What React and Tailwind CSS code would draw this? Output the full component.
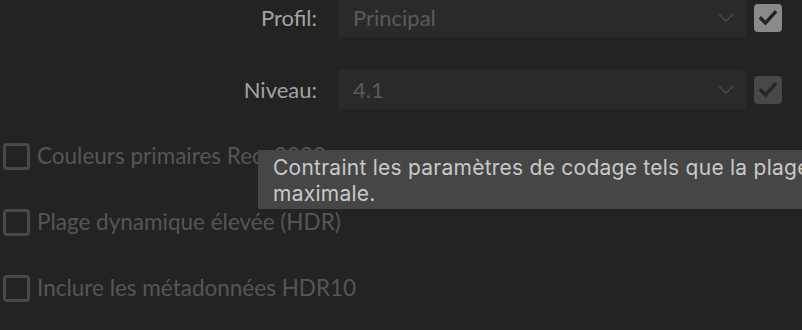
import { useState } from 'react';

function Chevron() {
  return (
    <svg width="16" height="9" viewBox="0 0 16 9" fill="none" className="shrink-0">
      <path d="M1 1l7 7 7-7" stroke="#4a4a4a" strokeWidth="1.6" />
    </svg>
  );
}

function CheckMark({ color }) {
  return (
    <svg width="18" height="16" viewBox="0 0 18 16" fill="none">
      <path d="M2 8.5l4.5 4.5L16 2.5" stroke={color} strokeWidth="3.4" strokeLinecap="square" />
    </svg>
  );
}

function SelectRow({ label, value, boxBg, checkColor }) {
  return (
    <div className="flex items-center">
      <span className="w-[317px] text-right text-[22px] leading-[28px] text-[#a3a3a3]">{label}</span>
      <div className="ml-[21px] flex h-[39px] w-[408px] items-center justify-between rounded-[4px] bg-[#2a2a2a] pl-[15px] pr-[12px]">
        <span className="text-[22px] leading-[28px] text-[#5a5a5a]">{value}</span>
        <Chevron />
      </div>
      <div className={`ml-[8px] flex h-[28px] w-[28px] items-center justify-center rounded-[4px] ${boxBg}`}>
        <CheckMark color={checkColor} />
      </div>
    </div>
  );
}

function CheckRow({ label }) {
  const [on, setOn] = useState(false);
  return (
    <button type="button" onClick={() => setOn(!on)} className="flex h-[28px] items-center text-left">
      <span className="ml-[3px] h-[27px] w-[27px] rounded-[4px] border-[3px] border-[#484848]" />
      <span className="ml-[7px] text-[22.5px] leading-[28px] text-[#565656]">{label}</span>
    </button>
  );
}

export default function App() {
  return (
    <div
      className="relative h-[330px] w-[802px] overflow-hidden bg-[#232323]"
      style={{ fontFamily: 'Lato, "Open Sans", sans-serif' }}
    >
      <div className="mt-[-2px] flex flex-col gap-[33px]">
        <SelectRow label="Profil:" value="Principal" boxBg="bg-[#8a8a8a]" checkColor="#232323" />
        <SelectRow label="Niveau:" value="4.1" boxBg="bg-[#484848]" checkColor="#262626" />
      </div>
      <div className="mt-[33px] flex flex-col items-start gap-[38px]">
        <CheckRow label="Couleurs primaires Rec. 2020" />
        <CheckRow label="Plage dynamique élevée (HDR)" />
        <CheckRow label="Inclure les métadonnées HDR10" />
      </div>

      <div
        className="absolute left-[258px] top-[150px] w-[720px] bg-[#464646] pb-[2px] pl-[15px] pt-[5px] text-[21px] leading-[26px] tracking-[0.25px] text-[#c9c9c9]"
        style={{ fontFamily: 'Inter, "Noto Sans", sans-serif' }}
      >
        <div className="whitespace-nowrap">Contraint les paramètres de codage tels que la plage dynamique</div>
        <div>maximale.</div>
      </div>
    </div>
  );
}
